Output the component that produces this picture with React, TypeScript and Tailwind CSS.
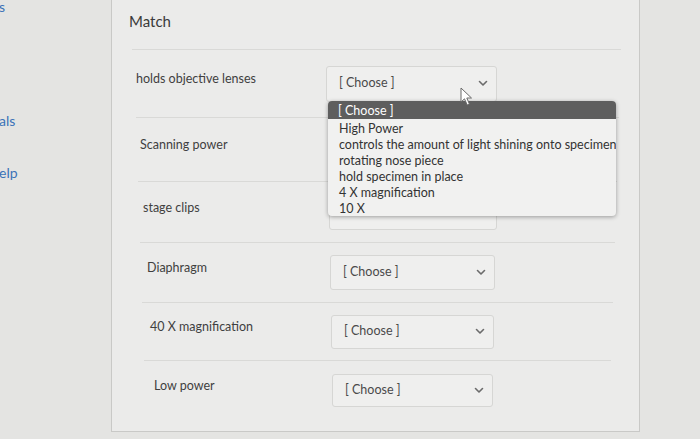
import React from "react";

const Chevron = () => (
  <svg width="10" height="7" viewBox="0 0 10 7" fill="none">
    <path d="M1.5 1.5 L5 5 L8.5 1.5" stroke="#6b6b6b" strokeWidth="1.6" strokeLinecap="round" strokeLinejoin="round" />
  </svg>
);

type Row = {
  label: string;
  h: string;
  labelPl: string;
  selPl: string;
  selW: string;
  selH: string;
  lineMl: string;
  lineMr: string;
};

const rows: Row[] = [
  { label: "holds objective lenses", h: "h-[67px]", labelPl: "pl-[24px]", selPl: "pl-[214px]", selW: "w-[171px]", selH: "h-[36px]", lineMl: "ml-[20px]", lineMr: "mr-[18px]" },
  { label: "Scanning power", h: "h-[63px]", labelPl: "pl-[28px]", selPl: "pl-[216px]", selW: "w-[169px]", selH: "h-[36px]", lineMl: "ml-[24px]", lineMr: "mr-[20px]" },
  { label: "stage clips", h: "h-[60px]", labelPl: "pl-[31px]", selPl: "pl-[217px]", selW: "w-[168px]", selH: "h-[36px]", lineMl: "ml-[26px]", lineMr: "mr-[22px]" },
  { label: "Diaphragm", h: "h-[59px]", labelPl: "pl-[35px]", selPl: "pl-[218px]", selW: "w-[165px]", selH: "h-[35px]", lineMl: "ml-[28px]", lineMr: "mr-[24px]" },
  { label: "40 X magnification", h: "h-[57px]", labelPl: "pl-[38px]", selPl: "pl-[219px]", selW: "w-[163px]", selH: "h-[34px]", lineMl: "ml-[30px]", lineMr: "mr-[26px]" },
  { label: "Low power", h: "h-[58px]", labelPl: "pl-[42px]", selPl: "pl-[220px]", selW: "w-[161px]", selH: "h-[33px]", lineMl: "ml-[32px]", lineMr: "mr-[28px]" },
];

const options = [
  "High Power",
  "controls the amount of light shining onto specimen",
  "rotating nose piece",
  "hold specimen in place",
  "4 X magnification",
  "10 X",
];

export default function App() {
  return (
    <div
      className="relative w-[700px] h-[439px] overflow-hidden bg-[#e4e4e2] flex"
      style={{ fontFamily: "Lato, 'Open Sans', sans-serif" }}
    >
      {/* Sidebar */}
      <div className="w-[111px] shrink-0 relative text-[#3b73b8] text-[14px] leading-[16px]">
        <div className="absolute left-[-1px] top-[-1px]">s</div>
        <div className="absolute left-[-1px] top-[113px]">als</div>
        <div className="absolute left-[-1px] top-[165px]">elp</div>
      </div>

      {/* Main panel */}
      <div className="w-[529px] h-[432px] shrink-0 bg-[#ebebea] border-l border-r border-b border-[#c9c9c7] flex flex-col">
        <div className="h-[49px] pl-[17px] pt-[10px] text-[15px] text-[#3a3a3a]">Match</div>
        {rows.map((r, i) => (
          <div key={i} className="flex flex-col">
            <div className={`h-px bg-[#d9d9d7] ${r.lineMl} ${r.lineMr}`} />
            <div className={`${r.h} relative flex items-center`}>
              <div className={`absolute ${r.labelPl} -translate-y-[4px] text-[12.5px] text-[#3f3f3f]`}>{r.label}</div>
              <div className={`absolute left-0 ${r.selPl}`}>
                <div
                  className={`${r.selW} ${r.selH} bg-[#efefee] border border-[#d6d6d4] rounded-[3px] flex items-center justify-between pl-[12px] pr-[8px] text-[12.5px] text-[#4a4a4a]`}
                >
                  <span className={i === 2 ? "-translate-y-[4px]" : ""}>[ Choose ]</span>
                  <Chevron />
                </div>
              </div>
            </div>
          </div>
        ))}
      </div>

      {/* Dropdown list overlay */}
      <div className="absolute left-[328px] top-[101px] w-[288px] h-[115px] bg-[#f1f1f0] rounded-[4px] shadow-[0_1px_4px_rgba(0,0,0,0.35)] overflow-hidden text-[12.5px] leading-[16px]">
        <div className="h-[18px] bg-[#5e5e5e] text-white pl-[10px] flex items-center">
          <span className="leading-[16px] pt-[2px]">[ Choose ]</span>
        </div>
        <div className="pl-[11px] pt-[2px] text-[#333333]">
          {options.map((o) => (
            <div key={o} className="whitespace-nowrap">{o}</div>
          ))}
        </div>
      </div>

      {/* Mouse cursor */}
      <svg className="absolute left-[460px] top-[87px]" width="14" height="20" viewBox="0 0 14 20">
        <path d="M1 1 L1 15 L4.5 11.8 L7.2 18 L9.4 17 L6.8 11 L11.5 11 Z" fill="#ffffff" stroke="#6a6a6a" strokeWidth="1" strokeLinejoin="round" />
      </svg>
    </div>
  );
}
